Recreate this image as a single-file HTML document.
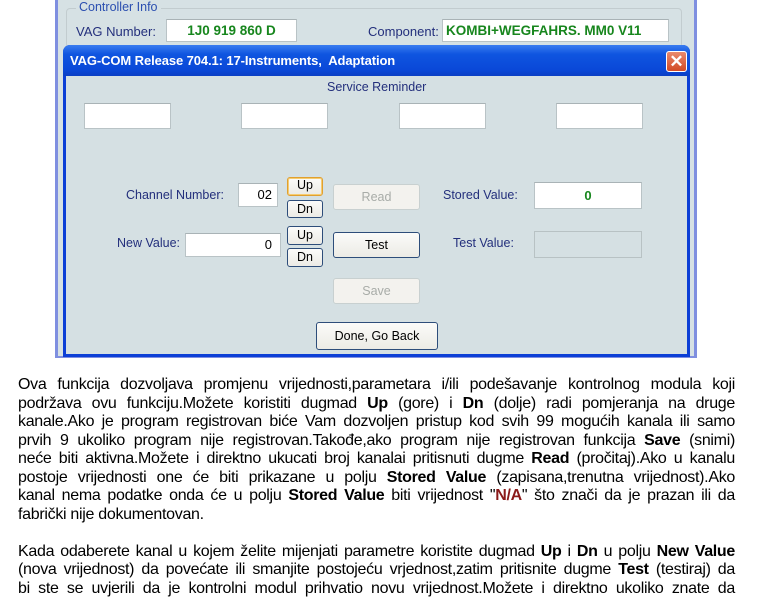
<!DOCTYPE html>
<html><head><meta charset="utf-8"><style>
*{margin:0;padding:0;box-sizing:border-box}
body{width:769px;height:590px;background:#fff;position:relative;overflow:hidden;font-family:"Liberation Sans",sans-serif}
.a{position:absolute}
.lbl{position:absolute;font-size:12.5px;color:#232f7c;white-space:nowrap}
.box{position:absolute;background:#fff;border:1px solid #b9c3c6;border-top-color:#a9b3b6}
.btn{position:absolute;background:linear-gradient(#fbfbf9,#ecebe5);border:1px solid #2d4d7a;border-radius:3px;font-size:12.5px;color:#000;text-align:center}
.dis{border-color:#c8d0d0;color:#a8aca8;background:#f3f2ee}
.txt{position:absolute;left:18px;width:717px;font-size:16px;letter-spacing:-0.3px;color:#000;line-height:18.5px}
.ln{text-align:justify;text-align-last:justify;white-space:nowrap;height:18.5px}
.ln.l{text-align-last:left}
b{font-weight:bold}
</style></head><body>
<div class="a" style="left:55px;top:0;width:642px;height:358px;background:#d6e1e4;border-left:3px solid #7f8fe0;border-right:3px solid #7f8fe0;border-bottom:2px solid #7f8fe0"></div>
<div class="a" style="left:66px;top:8px;width:616px;height:40px;border:1px solid #c2cccf;border-radius:4px"></div>
<div class="lbl" style="left:76px;top:0px;background:#d6e1e4;padding:0 3px;font-size:12.5px;color:#2b4fb0">Controller Info</div>
<div class="lbl" style="left:76px;top:24px;font-size:13px">VAG Number:</div>
<div class="box" style="left:166px;top:19px;width:131px;height:23px;font-size:13.5px;font-weight:bold;color:#17861d;text-align:center;line-height:21px">1J0 919 860 D</div>
<div class="lbl" style="left:368px;top:24px;font-size:13px">Component:</div>
<div class="box" style="left:442px;top:19px;width:227px;height:23px;font-size:13.5px;font-weight:bold;color:#17861d;padding-left:3px;line-height:21px;white-space:nowrap">KOMBI+WEGFAHRS. MM0 V11</div>
<div class="a" style="left:63px;top:45px;width:627px;height:312px;background:#0c3fd6;border-radius:7px 7px 0 0"></div>
<div class="a" style="left:63px;top:45px;width:627px;height:31px;background:linear-gradient(#3a7cf0,#0f55e0 30%,#0a48d8 80%,#0b3fc4);border-radius:7px 7px 0 0"></div>
<div class="a" style="left:70px;top:53px;font-size:13px;font-weight:bold;color:#fff;white-space:nowrap;letter-spacing:-0.1px">VAG-COM Release 704.1: 17-Instruments,&nbsp; Adaptation</div>
<div class="a" style="left:666px;top:51px;width:21px;height:21px;background:linear-gradient(#e88a6e,#d24a25);border:1px solid #fff;border-radius:3px;color:#fff;font-size:17px;font-weight:bold;text-align:center;line-height:19px">✕</div>
<div class="a" style="left:66px;top:76px;width:621px;height:278px;background:#d5e0e3"></div>
<div class="lbl" style="left:327px;top:80px">Service Reminder</div>
<div class="box" style="left:84px;top:103px;width:87px;height:26px"></div>
<div class="box" style="left:241px;top:103px;width:87px;height:26px"></div>
<div class="box" style="left:399px;top:103px;width:87px;height:26px"></div>
<div class="box" style="left:556px;top:103px;width:87px;height:26px"></div>

<div class="lbl" style="left:126px;top:188px">Channel Number:</div>
<div class="box" style="left:238px;top:183px;width:40px;height:24px;font-size:13px;text-align:right;padding-right:5px;line-height:22px">02</div>
<div class="btn" style="left:287px;top:177px;width:36px;height:19px;border-color:#e0a030;box-shadow:inset 0 0 0 1px #f6cc70;line-height:15px">Up</div>
<div class="btn" style="left:287px;top:200px;width:36px;height:18px;line-height:16px">Dn</div>
<div class="btn dis" style="left:333px;top:184px;width:87px;height:26px;line-height:24px">Read</div>
<div class="lbl" style="left:443px;top:188px">Stored Value:</div>
<div class="box" style="left:534px;top:182px;width:108px;height:27px;font-size:13px;font-weight:bold;color:#17861d;text-align:center;line-height:25px">0</div>

<div class="lbl" style="left:117px;top:236px">New Value:</div>
<div class="box" style="left:185px;top:233px;width:96px;height:24px;font-size:13px;text-align:right;padding-right:8px;line-height:22px">0</div>
<div class="btn" style="left:287px;top:226px;width:36px;height:19px;line-height:16px">Up</div>
<div class="btn" style="left:287px;top:248px;width:36px;height:19px;line-height:17px">Dn</div>
<div class="btn" style="left:333px;top:232px;width:87px;height:26px;line-height:24px">Test</div>
<div class="lbl" style="left:453px;top:236px">Test Value:</div>
<div class="box" style="left:534px;top:231px;width:108px;height:27px;background:#d5e0e3;border-color:#b8c2c4"></div>
<div class="btn dis" style="left:333px;top:278px;width:87px;height:26px;line-height:24px">Save</div>
<div class="btn" style="left:316px;top:322px;width:122px;height:28px;line-height:26px">Done, Go Back</div>

<div class="txt" style="top:376px">
<div class="ln">Ova funkcija dozvoljava promjenu vrijednosti,parametara i/ili podešavanje kontrolnog modula koji</div>
<div class="ln">podržava ovu funkciju.Možete koristiti dugmad <b>Up</b> (gore) i <b>Dn</b> (dolje) radi pomjeranja na druge</div>
<div class="ln">kanale.Ako je program registrovan biće Vam dozvoljen pristup kod svih 99 mogućih kanala ili samo</div>
<div class="ln">prvih 9 ukoliko program nije registrovan.Takođe,ako program nije registrovan funkcija <b>Save</b> (snimi)</div>
<div class="ln">neće biti aktivna.Možete i direktno ukucati broj kanalai pritisnuti dugme <b>Read</b> (pročitaj).Ako u kanalu</div>
<div class="ln">postoje vrijednosti one će biti prikazane u polju <b>Stored Value</b> (zapisana,trenutna vrijednost).Ako</div>
<div class="ln">kanal nema podatke onda će u polju <b>Stored Value</b> biti vrijednost "<b style="color:#8b1a1a">N/A</b>" što znači da je prazan ili da</div>
<div class="ln l">fabrički nije dokumentovan.</div>
<div class="ln l"></div>
<div class="ln">Kada odaberete kanal u kojem želite mijenjati parametre koristite dugmad <b>Up</b> i <b>Dn</b> u polju <b>New Value</b></div>
<div class="ln">(nova vrijednost) da povećate ili smanjite postojeću vrjednost,zatim pritisnite dugme <b>Test</b> (testiraj) da</div>
<div class="ln">bi ste se uvjerili da je kontrolni modul prihvatio novu vrijednost.Možete i direktno ukoliko znate da</div>
</div>
</body></html>
